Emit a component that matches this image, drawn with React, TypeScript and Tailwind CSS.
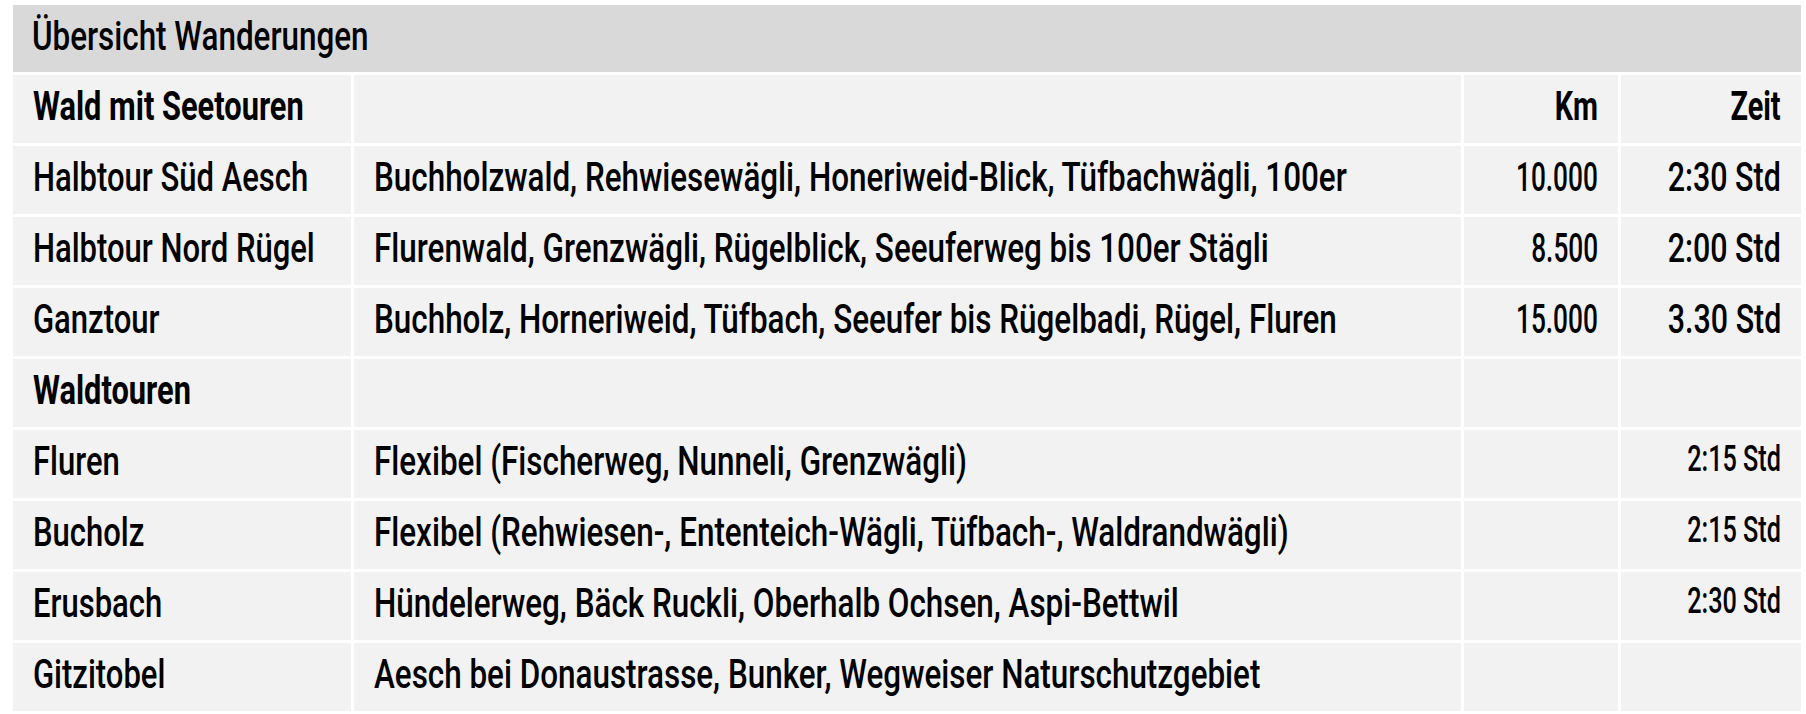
type Row = {
  name: string;
  route?: string;
  km?: string;
  zeit?: string;
  heading?: boolean;
  small?: boolean;
};

const rows: Row[] = [
  { name: "Wald mit Seetouren", km: "Km", zeit: "Zeit", heading: true },
  {
    name: "Halbtour Süd Aesch",
    route: "Buchholzwald, Rehwiesewägli, Honeriweid-Blick, Tüfbachwägli, 100er",
    km: "10.000",
    zeit: "2:30 Std",
  },
  {
    name: "Halbtour Nord Rügel",
    route: "Flurenwald, Grenzwägli, Rügelblick, Seeuferweg bis 100er Stägli",
    km: "8.500",
    zeit: "2:00 Std",
  },
  {
    name: "Ganztour",
    route: "Buchholz, Horneriweid, Tüfbach, Seeufer bis Rügelbadi, Rügel, Fluren",
    km: "15.000",
    zeit: "3.30 Std",
  },
  { name: "Waldtouren", heading: true },
  {
    name: "Fluren",
    route: "Flexibel (Fischerweg, Nunneli, Grenzwägli)",
    zeit: "2:15 Std",
    small: true,
  },
  {
    name: "Bucholz",
    route: "Flexibel (Rehwiesen-, Ententeich-Wägli, Tüfbach-, Waldrandwägli)",
    zeit: "2:15 Std",
    small: true,
  },
  {
    name: "Erusbach",
    route: "Hündelerweg, Bäck Ruckli, Oberhalb Ochsen, Aspi-Bettwil",
    zeit: "2:30 Std",
    small: true,
  },
  {
    name: "Gitzitobel",
    route: "Aesch bei Donaustrasse, Bunker, Wegweiser Naturschutzgebiet",
  },
];

const cell = "flex h-[68px] items-center overflow-hidden bg-[#f2f2f2] px-[20px] pb-[4px]";

// the source font is a narrow DIN face; squeeze Roboto to roughly its width
function Narrow({
  children,
  right,
  bold,
  squeeze = "scale-x-[0.78]",
}: {
  children?: React.ReactNode;
  right?: boolean;
  bold?: boolean;
  squeeze?: string;
}) {
  return (
    <span
      className={`inline-block shrink-0 whitespace-nowrap ${squeeze} ${
        right ? "origin-right" : "origin-left"
      } ${bold ? "font-bold" : "font-medium"}`}
    >
      {children}
    </span>
  );
}

export default function App() {
  return (
    <div className="min-h-screen bg-white pl-[13px] pt-[5px] font-['Roboto','Liberation_Sans',Arial,sans-serif] text-[40px] leading-none text-black">
      <div className="grid w-[1788px] grid-cols-[338px_1107px_154px_180px] gap-[3px]">
        <div className="col-span-4 flex h-[67px] items-center overflow-hidden bg-[#d9d9d9] px-[19px] pb-[4px]">
          <Narrow squeeze="scale-x-[0.785]">Übersicht Wanderungen</Narrow>
        </div>
        {rows.map((r) => (
          <div key={r.name} className="contents">
            <div className={cell}>
              <Narrow bold={r.heading} squeeze={r.heading ? "scale-x-[0.77]" : "scale-x-[0.775]"}>
                {r.name}
              </Narrow>
            </div>
            <div className={cell}>
              <Narrow squeeze="scale-x-[0.785]">{r.route}</Narrow>
            </div>
            <div className={`${cell} justify-end`}>
              <Narrow right bold={r.heading} squeeze={r.heading ? "scale-x-[0.72]" : "scale-x-[0.655]"}>
                {r.km}
              </Narrow>
            </div>
            <div className={`${cell} justify-end ${r.small ? "pb-[10px] text-[36px]" : ""}`}>
              <Narrow
                right
                bold={r.heading}
                squeeze={r.heading ? "scale-x-[0.72]" : r.small ? "scale-x-[0.7]" : "scale-x-[0.76]"}
              >
                {r.zeit}
              </Narrow>
            </div>
          </div>
        ))}
      </div>
    </div>
  );
}
